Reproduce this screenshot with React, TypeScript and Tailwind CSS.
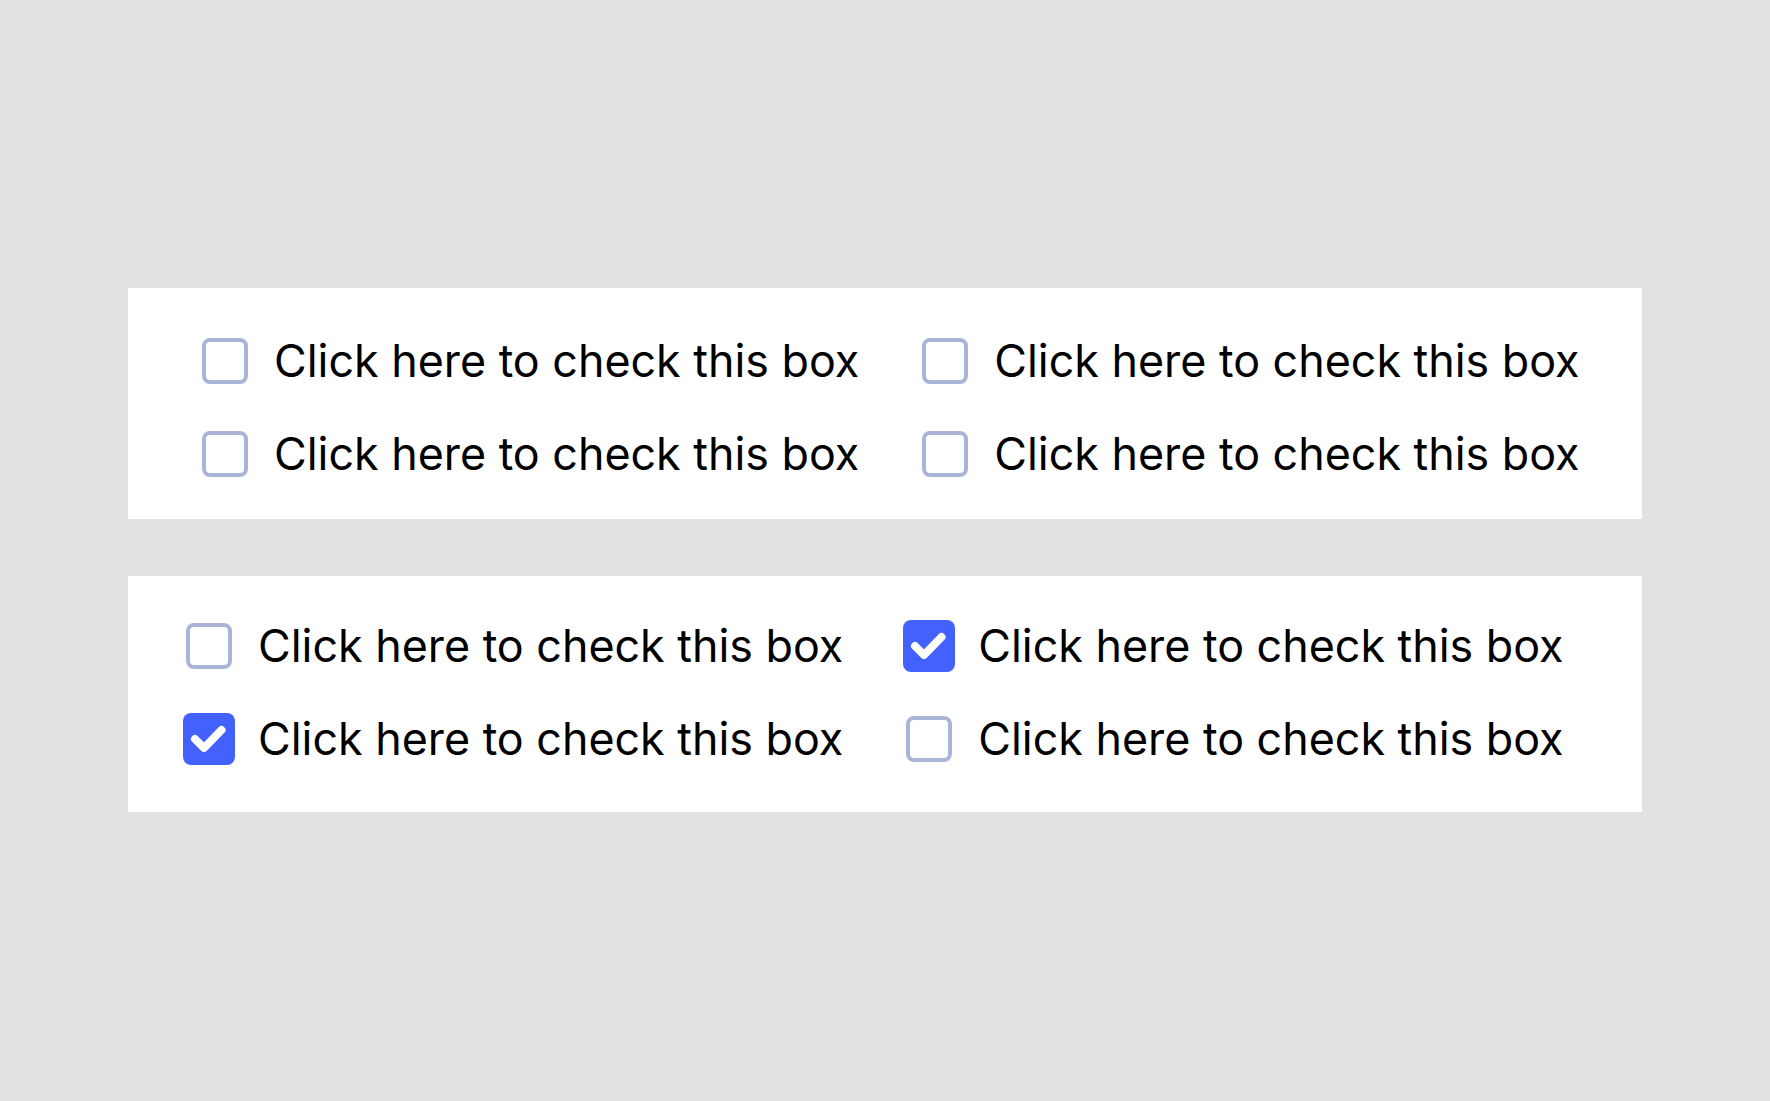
import React from "react";

function Box({ checked }: { checked: boolean }) {
  if (checked) {
    return (
      <div className="w-[46px] h-[46px] flex items-center justify-center shrink-0">
        <div className="w-[52px] h-[52px] shrink-0 rounded-[8px] bg-[#4361ff] flex items-center justify-center">
          <svg width="52" height="52" viewBox="0 0 52 52">
            <path d="M12 26 L21 35 L38.5 17" fill="none" stroke="#ffffff" strokeWidth="8" strokeLinecap="round" strokeLinejoin="round" />
          </svg>
        </div>
      </div>
    );
  }
  return <div className="w-[46px] h-[46px] shrink-0 rounded-[8px] border-[4px] border-[#a9b4d8] bg-white" />;
}

function Item({ checked }: { checked: boolean }) {
  return (
    <div className="flex items-center gap-[26px]">
      <Box checked={checked} />
      <span className="text-[44.8px] leading-[46px] pt-[1px] text-black whitespace-nowrap">Click here to check this box</span>
    </div>
  );
}

export default function App() {
  return (
    <div className="w-[1770px] h-[1101px] bg-[#e2e2e2] pt-[288px] pl-[128px]" style={{ fontFamily: "Inter, 'Noto Sans', sans-serif" }}>
      <div className="w-[1514px] h-[231px] bg-white pl-[74px] pt-[49px]">
        <div className="grid grid-cols-[auto_auto] justify-start gap-x-[63px] gap-y-[46px]">
          <Item checked={false} />
          <Item checked={false} />
          <Item checked={false} />
          <Item checked={false} />
        </div>
      </div>
      <div className="w-[1514px] h-[236px] bg-white mt-[57px] pl-[58px] pt-[46px]">
        <div className="grid grid-cols-[auto_auto] justify-start gap-x-[63px] gap-y-[46px]">
          <Item checked={false} />
          <Item checked={true} />
          <Item checked={true} />
          <Item checked={false} />
        </div>
      </div>
    </div>
  );
}
